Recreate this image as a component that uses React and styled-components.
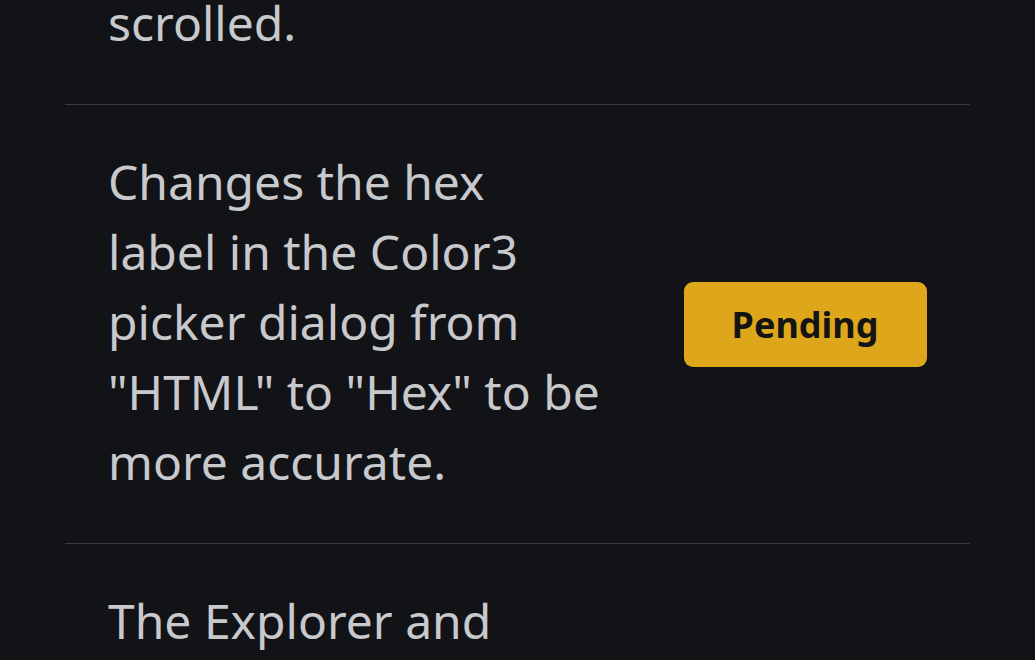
import React from 'react'
import styled, { createGlobalStyle } from 'styled-components'

const GlobalStyle = createGlobalStyle`
    html, body {
        margin:0;
        padding:0;
        background:#121317;
        overflow:hidden;
    }
    body {
        font-family:"Noto Sans", "Open Sans", sans-serif;
    }
`
const ChangeTable = styled.div`
    width:905px;
    margin:-404px auto 0;
    display:flex;
    flex-direction:column;`
const ChangeRow = styled.div`
    display:grid;
    grid-template-columns:575px 1fr;
    align-items:center;
    border-top:${props => props.first ? "none" : "1px solid #3a3b3f"};`
const Description = styled.p`
    margin:0;
    padding:42px 40px 46px 43px;
    color:#c8c9cc;
    font-size:48px;
    line-height:70px;`
const StatusCell = styled.div`
    display:flex;
    justify-content:center;`
const StatusBadge = styled.span`
    width:243px;
    height:85px;
    display:flex;
    align-items:center;
    justify-content:center;
    border-radius:9px;
    background-color:#dea71b;
    color:#141414;
    font-size:36px;
    font-weight:700;`

const changes = [
    { id: 1, text: "Fixes the Output window no longer following new messages after its contents were fully scrolled.", status: "Pending" },
    { id: 2, text: "Changes the hex label in the Color3 picker dialog from \"HTML\" to \"Hex\" to be more accurate.", status: "Pending" },
    { id: 3, text: "The Explorer and Properties windows now remember their width between sessions.", status: "Pending" },
]

export default function App() {
    return (
        <>
            <GlobalStyle />
            <ChangeTable>
                {changes.map((item, i) => {
                    return <ChangeRow key={item.id} first={i === 0}>
                        <Description>{item.text}</Description>
                        <StatusCell>
                            <StatusBadge>{item.status}</StatusBadge>
                        </StatusCell>
                    </ChangeRow>
                })}
            </ChangeTable>
        </>
    )
}
